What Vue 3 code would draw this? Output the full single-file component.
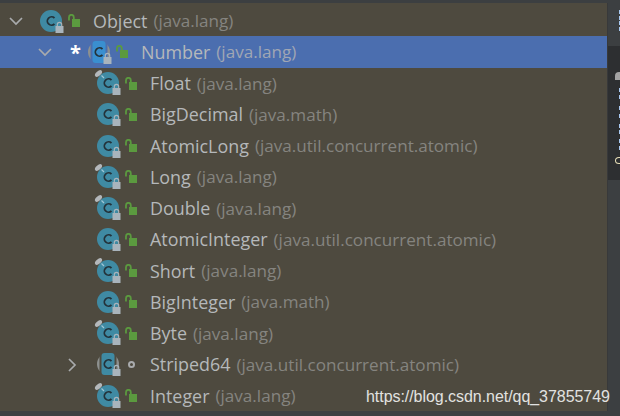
<template>
  <div class="window">
    <div class="topbar"></div>
    <div class="body">
      <div class="tree">
        <div
          v-for="row in rows"
          :key="row.name"
          class="row"
          :class="{ selected: row.selected }"
          :style="{ paddingLeft: row.indent + 'px' }"
        >
          <svg v-if="row.arrow" class="arrow" :style="{ left: row.arrowX + 'px' }" width="16" height="16" viewBox="0 0 16 16">
            <path v-if="row.arrow === 'down'" d="M2 5l6 6 6-6" />
            <path v-else d="M5 2l6 6-6 6" />
          </svg>
          <span v-if="row.selected" class="star">*</span>
          <svg class="icon" width="24" height="26" viewBox="0 0 24 26">
            <template v-if="row.kind === 'abstract' || row.selected">
              <circle cx="11" cy="13" r="11" class="side" />
              <rect x="2.500" y="1" width="17" height="24" class="gap" />
              <rect x="4.500" y="2" width="13" height="22" rx="3" :class="row.selected ? 'body-sel' : 'body-abs'" />
            </template>
            <circle v-else cx="11" cy="13" r="11" class="disc" />
            <template v-if="row.pin">
              <ellipse cx="1.500" cy="3.500" rx="4.200" ry="2.300" transform="rotate(-40 1.500 3.500)" class="pin" />
              <path d="M4.500 5.500l2.500 2.500" class="pin-tick" />
            </template>
            <path d="M14.500 10a4.200 4.200 0 1 0 0 6" class="letter" />
            <rect x="15.500" y="18" width="8" height="7" class="lock" />
            <path d="M17.300 18v-1.500a2.200 2.200 0 0 1 4.400 0V18" class="shackle" />
          </svg>
          <svg v-if="row.kind === 'abstract'" class="access" width="13" height="13" viewBox="0 0 13 13">
            <circle cx="6.500" cy="6.500" r="2.500" class="dot" />
          </svg>
          <svg v-else class="access" width="13" height="13" viewBox="0 0 13 13">
            <rect x="4" y="5" width="8" height="8" class="open-body" />
            <path d="M1 6.500V3.200a2.400 2.400 0 0 1 4.800 0V5" class="open-arc" />
          </svg>
          <span class="name">{{ row.name }}</span>
          <span class="pkg">({{ row.pkg }})</span>
        </div>
      </div>
      <div class="strip">
        <div class="strip-top">
          <i v-for="y in [7, 13, 18, 24]" :key="y" class="frag" :style="{ top: y + 'px' }"></i>
        </div>
        <div class="strip-tab">
          <span class="tab-glyph"></span>
          <i v-for="y in tabMarks" :key="y" class="frag" :style="{ top: y + 'px' }"></i>
          <span class="tab-arc"></span>
        </div>
      </div>
    </div>
    <div class="bottom"></div>
    <div class="watermark">https://blog.csdn.net/qq_37855749</div>
  </div>
</template>

<script setup>
const leaf = (name, pkg, pin) => ({ name, pkg, pin, indent: 97 })

const rows = [
  { name: 'Object', pkg: 'java.lang', indent: 40, arrow: 'down', arrowX: 8 },
  { name: 'Number', pkg: 'java.lang', indent: 88, arrow: 'down', arrowX: 37, selected: true },
  leaf('Float', 'java.lang', true),
  leaf('BigDecimal', 'java.math', false),
  leaf('AtomicLong', 'java.util.concurrent.atomic', false),
  leaf('Long', 'java.lang', true),
  leaf('Double', 'java.lang', true),
  leaf('AtomicInteger', 'java.util.concurrent.atomic', false),
  leaf('Short', 'java.lang', true),
  leaf('BigInteger', 'java.math', false),
  leaf('Byte', 'java.lang', true),
  { name: 'Striped64', pkg: 'java.util.concurrent.atomic', indent: 97, arrow: 'right', arrowX: 64, kind: 'abstract' },
  leaf('Integer', 'java.lang', true)
]

// sliver of the cropped tool-window label, offsets inside the dark tab
const tabMarks = [42, 49, 60, 68, 78, 84, 93, 100]
</script>

<style>
html, body { margin: 0; background: #4e4a3f; }
</style>

<style scoped>
.window { position: relative; width: 620px; height: 416px; overflow: hidden; display: flex; flex-direction: column; background: #4e4a3f; font-family: "Open Sans", "Noto Sans", sans-serif; font-size: 17.9px; }
.topbar { height: 3px; flex: none; background: #3c3f41; }
.body { flex: 1; display: flex; min-height: 0; }
.tree { width: 607px; flex: none; padding-top: 2px; box-sizing: border-box; }
.row { position: relative; height: 31.25px; display: flex; align-items: center; box-sizing: border-box; white-space: nowrap; }
.row.selected { background: #4b6eaf; }
.arrow { position: absolute; top: 8px; fill: none; stroke: #a9abad; stroke-width: 1.7; }
.star { position: absolute; left: 70px; top: 3px; color: #fff; font-size: 20px; font-weight: 700; }
.icon { flex: none; overflow: visible; }
.disc { fill: #3f8aa3; }
.side { fill: #8d908f; }
.gap { fill: #4e4a3f; }
.selected .gap { fill: #4b6eaf; }
.body-abs { fill: #3f8aa3; }
.body-sel { fill: #3a8fd0; }
.letter { fill: none; stroke: #23323a; stroke-width: 1.800; }
.pin { fill: #b4b8bb; }
.pin-tick { stroke: #9fc6d6; stroke-width: 1.200; }
.lock { fill: #a9b4bc; }
.shackle { fill: none; stroke: #a9b4bc; stroke-width: 1.200; }
.access { flex: none; margin-left: 4px; margin-right: 12px; }
.open-body { fill: #5b9a3f; }
.open-arc { fill: none; stroke: #5b9a3f; stroke-width: 1.800; }
.dot { fill: none; stroke: #a9abad; stroke-width: 2; }
.name { color: #b5b8ba; }
.pkg { color: #85847f; margin-left: 6px; font-size: 17.1px; }
.selected .pkg { color: #a0a6b4; }
.strip { flex: 1; display: flex; flex-direction: column; background: #3c3f41; border-left: 1px solid #38393a; }
.strip-top { position: relative; height: 43px; flex: none; }
.strip-tab { position: relative; height: 134px; flex: none; background: #2d2f31; }
.frag { position: absolute; right: 0; width: 1px; height: 4px; background: #a8c8f0; }
.tab-glyph { position: absolute; right: 0; top: 26px; width: 5px; height: 8px; background: #a3a3a3; border-top-left-radius: 4px; }
.tab-arc { position: absolute; right: -3px; top: 111px; width: 6px; height: 5px; border: 1px solid #e8e0b8; border-radius: 50%; }
.bottom { height: 5px; flex: none; background: #3c3f41; }
.watermark { position: absolute; left: 366px; top: 388px; color: #e2e2e0; font-family: "Liberation Sans", Arial, sans-serif; font-size: 16px; line-height: 18px; letter-spacing: -0.05px; white-space: nowrap; }
</style>
